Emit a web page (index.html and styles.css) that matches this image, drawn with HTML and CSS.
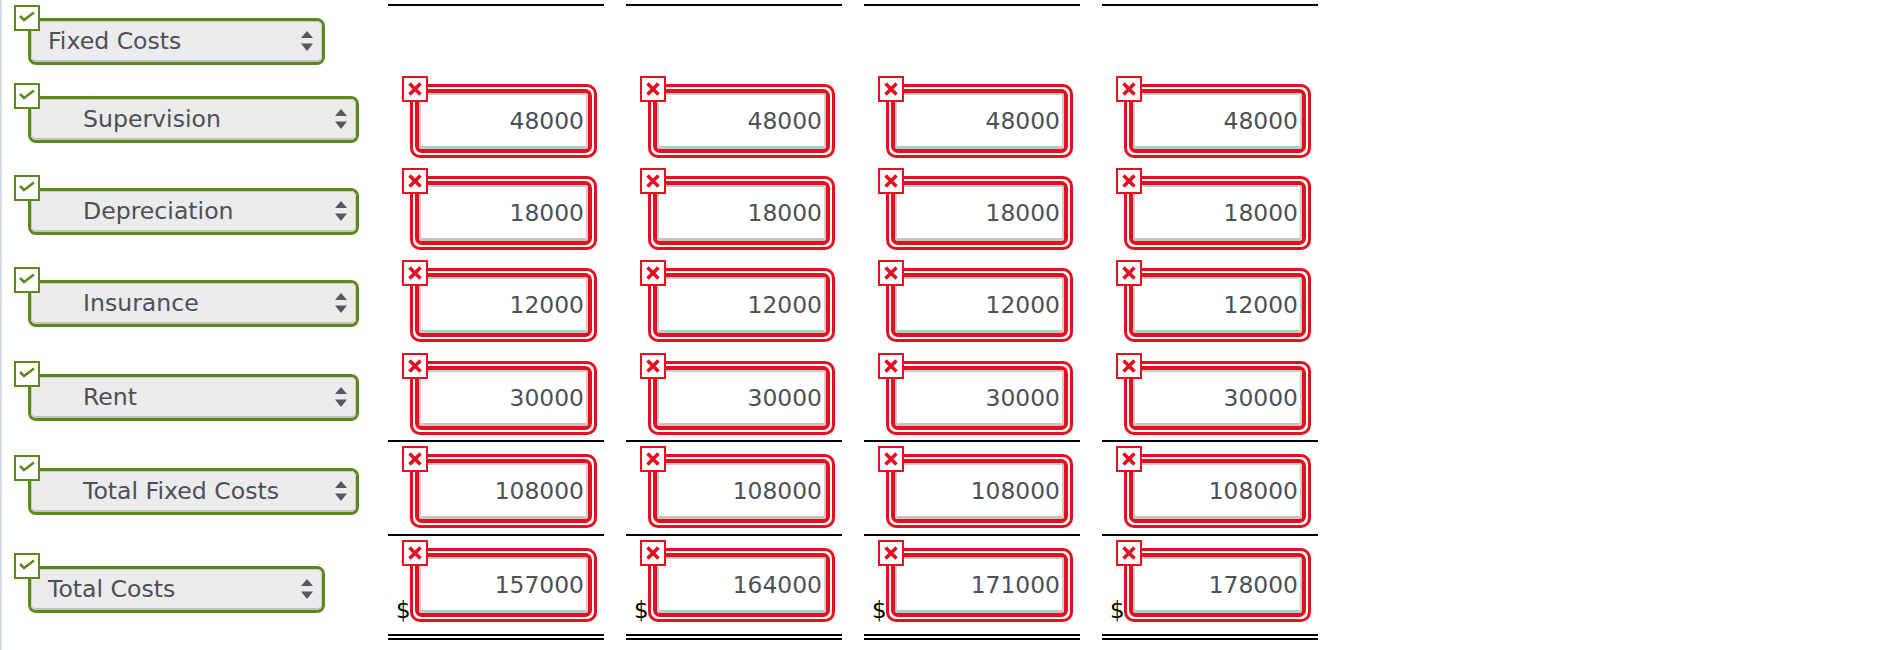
FILE: index.html
```html
<!DOCTYPE html>
<html>
<head>
<meta charset="utf-8">
<link rel="stylesheet" href="styles.css">
</head>
<body>
<div class="page">
  <div class="sheet">
    <!-- Row A -->
    <div class="label ra">
      <div class="pick short">
        <span class="ok"><svg viewBox="0 0 22 22" width="22" height="22"><polyline points="4,9 8,13 18,5.5" fill="none" stroke="#5c8a1e" stroke-width="2.5"/></svg></span>
        <div class="sel"><span class="txt">Fixed Costs</span><svg class="arr" viewBox="0 0 12 20" width="12" height="20"><polygon points="0,7 6,0 12,7" fill="#55585c"/><polygon points="0,12.5 6,20 12,12.5" fill="#55585c"/></svg></div>
      </div>
    </div>
    <div class="val ra rule"></div>
    <div class="val ra rule"></div>
    <div class="val ra rule"></div>
    <div class="val ra rule"></div>

    <!-- Row B -->
    <div class="label rb">
      <div class="pick long">
        <span class="ok"><svg viewBox="0 0 22 22" width="22" height="22"><polyline points="4,9 8,13 18,5.5" fill="none" stroke="#5c8a1e" stroke-width="2.5"/></svg></span>
        <div class="sel indent"><span class="txt">Supervision</span><svg class="arr" viewBox="0 0 12 20" width="12" height="20"><polygon points="0,7 6,0 12,7" fill="#55585c"/><polygon points="0,12.5 6,20 12,12.5" fill="#55585c"/></svg></div>
      </div>
    </div>
    <div class="val rb"><span class="cur"></span><div class="box"><span class="bad"><svg viewBox="0 0 22 22" width="22" height="22"><path d="M5.5 5.5 L16.5 16.5 M16.5 5.5 L5.5 16.5" stroke="#e2101f" stroke-width="3.6"/></svg></span><div class="inner"><div class="field">48000</div></div></div></div>
    <div class="val rb"><span class="cur"></span><div class="box"><span class="bad"><svg viewBox="0 0 22 22" width="22" height="22"><path d="M5.5 5.5 L16.5 16.5 M16.5 5.5 L5.5 16.5" stroke="#e2101f" stroke-width="3.6"/></svg></span><div class="inner"><div class="field">48000</div></div></div></div>
    <div class="val rb"><span class="cur"></span><div class="box"><span class="bad"><svg viewBox="0 0 22 22" width="22" height="22"><path d="M5.5 5.5 L16.5 16.5 M16.5 5.5 L5.5 16.5" stroke="#e2101f" stroke-width="3.6"/></svg></span><div class="inner"><div class="field">48000</div></div></div></div>
    <div class="val rb"><span class="cur"></span><div class="box"><span class="bad"><svg viewBox="0 0 22 22" width="22" height="22"><path d="M5.5 5.5 L16.5 16.5 M16.5 5.5 L5.5 16.5" stroke="#e2101f" stroke-width="3.6"/></svg></span><div class="inner"><div class="field">48000</div></div></div></div>

    <!-- Row C -->
    <div class="label rc">
      <div class="pick long">
        <span class="ok"><svg viewBox="0 0 22 22" width="22" height="22"><polyline points="4,9 8,13 18,5.5" fill="none" stroke="#5c8a1e" stroke-width="2.5"/></svg></span>
        <div class="sel indent"><span class="txt">Depreciation</span><svg class="arr" viewBox="0 0 12 20" width="12" height="20"><polygon points="0,7 6,0 12,7" fill="#55585c"/><polygon points="0,12.5 6,20 12,12.5" fill="#55585c"/></svg></div>
      </div>
    </div>
    <div class="val rc"><span class="cur"></span><div class="box"><span class="bad"><svg viewBox="0 0 22 22" width="22" height="22"><path d="M5.5 5.5 L16.5 16.5 M16.5 5.5 L5.5 16.5" stroke="#e2101f" stroke-width="3.6"/></svg></span><div class="inner"><div class="field">18000</div></div></div></div>
    <div class="val rc"><span class="cur"></span><div class="box"><span class="bad"><svg viewBox="0 0 22 22" width="22" height="22"><path d="M5.5 5.5 L16.5 16.5 M16.5 5.5 L5.5 16.5" stroke="#e2101f" stroke-width="3.6"/></svg></span><div class="inner"><div class="field">18000</div></div></div></div>
    <div class="val rc"><span class="cur"></span><div class="box"><span class="bad"><svg viewBox="0 0 22 22" width="22" height="22"><path d="M5.5 5.5 L16.5 16.5 M16.5 5.5 L5.5 16.5" stroke="#e2101f" stroke-width="3.6"/></svg></span><div class="inner"><div class="field">18000</div></div></div></div>
    <div class="val rc"><span class="cur"></span><div class="box"><span class="bad"><svg viewBox="0 0 22 22" width="22" height="22"><path d="M5.5 5.5 L16.5 16.5 M16.5 5.5 L5.5 16.5" stroke="#e2101f" stroke-width="3.6"/></svg></span><div class="inner"><div class="field">18000</div></div></div></div>

    <!-- Row D -->
    <div class="label rd">
      <div class="pick long">
        <span class="ok"><svg viewBox="0 0 22 22" width="22" height="22"><polyline points="4,9 8,13 18,5.5" fill="none" stroke="#5c8a1e" stroke-width="2.5"/></svg></span>
        <div class="sel indent"><span class="txt">Insurance</span><svg class="arr" viewBox="0 0 12 20" width="12" height="20"><polygon points="0,7 6,0 12,7" fill="#55585c"/><polygon points="0,12.5 6,20 12,12.5" fill="#55585c"/></svg></div>
      </div>
    </div>
    <div class="val rd"><span class="cur"></span><div class="box"><span class="bad"><svg viewBox="0 0 22 22" width="22" height="22"><path d="M5.5 5.5 L16.5 16.5 M16.5 5.5 L5.5 16.5" stroke="#e2101f" stroke-width="3.6"/></svg></span><div class="inner"><div class="field">12000</div></div></div></div>
    <div class="val rd"><span class="cur"></span><div class="box"><span class="bad"><svg viewBox="0 0 22 22" width="22" height="22"><path d="M5.5 5.5 L16.5 16.5 M16.5 5.5 L5.5 16.5" stroke="#e2101f" stroke-width="3.6"/></svg></span><div class="inner"><div class="field">12000</div></div></div></div>
    <div class="val rd"><span class="cur"></span><div class="box"><span class="bad"><svg viewBox="0 0 22 22" width="22" height="22"><path d="M5.5 5.5 L16.5 16.5 M16.5 5.5 L5.5 16.5" stroke="#e2101f" stroke-width="3.6"/></svg></span><div class="inner"><div class="field">12000</div></div></div></div>
    <div class="val rd"><span class="cur"></span><div class="box"><span class="bad"><svg viewBox="0 0 22 22" width="22" height="22"><path d="M5.5 5.5 L16.5 16.5 M16.5 5.5 L5.5 16.5" stroke="#e2101f" stroke-width="3.6"/></svg></span><div class="inner"><div class="field">12000</div></div></div></div>

    <!-- Row E -->
    <div class="label re">
      <div class="pick long">
        <span class="ok"><svg viewBox="0 0 22 22" width="22" height="22"><polyline points="4,9 8,13 18,5.5" fill="none" stroke="#5c8a1e" stroke-width="2.5"/></svg></span>
        <div class="sel indent"><span class="txt">Rent</span><svg class="arr" viewBox="0 0 12 20" width="12" height="20"><polygon points="0,7 6,0 12,7" fill="#55585c"/><polygon points="0,12.5 6,20 12,12.5" fill="#55585c"/></svg></div>
      </div>
    </div>
    <div class="val re"><span class="cur"></span><div class="box"><span class="bad"><svg viewBox="0 0 22 22" width="22" height="22"><path d="M5.5 5.5 L16.5 16.5 M16.5 5.5 L5.5 16.5" stroke="#e2101f" stroke-width="3.6"/></svg></span><div class="inner"><div class="field">30000</div></div></div></div>
    <div class="val re"><span class="cur"></span><div class="box"><span class="bad"><svg viewBox="0 0 22 22" width="22" height="22"><path d="M5.5 5.5 L16.5 16.5 M16.5 5.5 L5.5 16.5" stroke="#e2101f" stroke-width="3.6"/></svg></span><div class="inner"><div class="field">30000</div></div></div></div>
    <div class="val re"><span class="cur"></span><div class="box"><span class="bad"><svg viewBox="0 0 22 22" width="22" height="22"><path d="M5.5 5.5 L16.5 16.5 M16.5 5.5 L5.5 16.5" stroke="#e2101f" stroke-width="3.6"/></svg></span><div class="inner"><div class="field">30000</div></div></div></div>
    <div class="val re"><span class="cur"></span><div class="box"><span class="bad"><svg viewBox="0 0 22 22" width="22" height="22"><path d="M5.5 5.5 L16.5 16.5 M16.5 5.5 L5.5 16.5" stroke="#e2101f" stroke-width="3.6"/></svg></span><div class="inner"><div class="field">30000</div></div></div></div>

    <!-- Row F -->
    <div class="label rf">
      <div class="pick long">
        <span class="ok"><svg viewBox="0 0 22 22" width="22" height="22"><polyline points="4,9 8,13 18,5.5" fill="none" stroke="#5c8a1e" stroke-width="2.5"/></svg></span>
        <div class="sel indent"><span class="txt">Total Fixed Costs</span><svg class="arr" viewBox="0 0 12 20" width="12" height="20"><polygon points="0,7 6,0 12,7" fill="#55585c"/><polygon points="0,12.5 6,20 12,12.5" fill="#55585c"/></svg></div>
      </div>
    </div>
    <div class="val rf rule"><span class="cur"></span><div class="box"><span class="bad"><svg viewBox="0 0 22 22" width="22" height="22"><path d="M5.5 5.5 L16.5 16.5 M16.5 5.5 L5.5 16.5" stroke="#e2101f" stroke-width="3.6"/></svg></span><div class="inner"><div class="field">108000</div></div></div></div>
    <div class="val rf rule"><span class="cur"></span><div class="box"><span class="bad"><svg viewBox="0 0 22 22" width="22" height="22"><path d="M5.5 5.5 L16.5 16.5 M16.5 5.5 L5.5 16.5" stroke="#e2101f" stroke-width="3.6"/></svg></span><div class="inner"><div class="field">108000</div></div></div></div>
    <div class="val rf rule"><span class="cur"></span><div class="box"><span class="bad"><svg viewBox="0 0 22 22" width="22" height="22"><path d="M5.5 5.5 L16.5 16.5 M16.5 5.5 L5.5 16.5" stroke="#e2101f" stroke-width="3.6"/></svg></span><div class="inner"><div class="field">108000</div></div></div></div>
    <div class="val rf rule"><span class="cur"></span><div class="box"><span class="bad"><svg viewBox="0 0 22 22" width="22" height="22"><path d="M5.5 5.5 L16.5 16.5 M16.5 5.5 L5.5 16.5" stroke="#e2101f" stroke-width="3.6"/></svg></span><div class="inner"><div class="field">108000</div></div></div></div>

    <!-- Row G -->
    <div class="label rg">
      <div class="pick short">
        <span class="ok"><svg viewBox="0 0 22 22" width="22" height="22"><polyline points="4,9 8,13 18,5.5" fill="none" stroke="#5c8a1e" stroke-width="2.5"/></svg></span>
        <div class="sel"><span class="txt">Total Costs</span><svg class="arr" viewBox="0 0 12 20" width="12" height="20"><polygon points="0,7 6,0 12,7" fill="#55585c"/><polygon points="0,12.5 6,20 12,12.5" fill="#55585c"/></svg></div>
      </div>
    </div>
    <div class="val rg rule total"><span class="cur">$</span><div class="box"><span class="bad"><svg viewBox="0 0 22 22" width="22" height="22"><path d="M5.5 5.5 L16.5 16.5 M16.5 5.5 L5.5 16.5" stroke="#e2101f" stroke-width="3.6"/></svg></span><div class="inner"><div class="field">157000</div></div></div></div>
    <div class="val rg rule total"><span class="cur">$</span><div class="box"><span class="bad"><svg viewBox="0 0 22 22" width="22" height="22"><path d="M5.5 5.5 L16.5 16.5 M16.5 5.5 L5.5 16.5" stroke="#e2101f" stroke-width="3.6"/></svg></span><div class="inner"><div class="field">164000</div></div></div></div>
    <div class="val rg rule total"><span class="cur">$</span><div class="box"><span class="bad"><svg viewBox="0 0 22 22" width="22" height="22"><path d="M5.5 5.5 L16.5 16.5 M16.5 5.5 L5.5 16.5" stroke="#e2101f" stroke-width="3.6"/></svg></span><div class="inner"><div class="field">171000</div></div></div></div>
    <div class="val rg rule total"><span class="cur">$</span><div class="box"><span class="bad"><svg viewBox="0 0 22 22" width="22" height="22"><path d="M5.5 5.5 L16.5 16.5 M16.5 5.5 L5.5 16.5" stroke="#e2101f" stroke-width="3.6"/></svg></span><div class="inner"><div class="field">178000</div></div></div></div>
  </div>
</div>
</body>
</html>
```

FILE: styles.css
```css
* { box-sizing: border-box; }

html, body {
  margin: 0;
  padding: 0;
  background: #ffffff;
}

body {
  font-family: "DejaVu Sans", Verdana, sans-serif;
}

.page {
  border-left: 2px solid #d4dce7;
  min-height: 650px;
  padding-top: 4px;
}

.sheet {
  display: grid;
  grid-template-columns: 364px repeat(4, 216px);
  grid-template-rows: 72px 92px 92px 93px 87px 94px 106px;
  column-gap: 22px;
}

/* ---------- label column ---------- */
.label {
  padding-left: 26px;
}
.label.ra { padding-top: 14px; }
.label.rb, .label.rc, .label.rd { padding-top: 20px; }
.label.re { padding-top: 21px; }
.label.rf { padding-top: 28px; }
.label.rg { padding-top: 32px; }

.pick {
  position: relative;
  height: 47px;
  border: 3px solid #5a8a1a;
  border-radius: 8px;
  background: #ffffff;
}
.pick.short { width: 297px; }
.pick.long { width: 331px; }

.ok {
  position: absolute;
  left: -17px;
  top: -16px;
  width: 26px;
  height: 26px;
  border: 2px solid #5a8a1a;
  background: #ffffff;
  display: block;
  z-index: 2;
}
.ok svg { display: block; }

.sel {
  height: 100%;
  display: flex;
  align-items: center;
  justify-content: space-between;
  background: #ececee;
  border: 1px solid #cbcbcd;
  border-bottom: 2px solid #c2c2c4;
  border-radius: 5px;
  padding-left: 16px;
  padding-right: 8px;
}
.sel.indent { padding-left: 51px; }

.txt {
  font-size: 23.6px;
  color: #4d5054;
  white-space: nowrap;
}
.arr { display: block; flex: none; }

/* ---------- value columns ---------- */
.val {
  display: flex;
  align-items: flex-start;
  padding-left: 8px;
  padding-top: 8px;
}
.val.rule { border-top: 2px solid #000000; }
.val.ra { padding-top: 0; }
.val.rf, .val.rg { padding-top: 12px; }
.val.total { border-bottom: 6px double #000000; }

.cur {
  width: 14px;
  flex: none;
  align-self: flex-start;
  margin-top: 51px;
  font-size: 23px;
  line-height: 23px;
  color: #000000;
}

.box {
  position: relative;
  width: 187px;
  height: 74px;
  border: 3px solid #e60f1e;
  border-radius: 10px;
  padding: 2px;
  background: #ffffff;
}

.bad {
  position: absolute;
  left: -11px;
  top: -11px;
  width: 26px;
  height: 26px;
  border: 2px solid #e60f1e;
  background: #ffffff;
  display: block;
  z-index: 2;
}
.bad svg { display: block; }

.inner {
  height: 100%;
  border: 4px solid #e60f1e;
  border-radius: 7px;
  background: #ffffff;
}

.field {
  height: 100%;
  border: 2px solid #cdcdcd;
  border-bottom: 3px solid #c4c4c4;
  border-radius: 3px;
  background: #ffffff;
  display: flex;
  align-items: center;
  justify-content: flex-end;
  padding-right: 2px;
  font-size: 23.4px;
  color: #4d5054;
}
```
